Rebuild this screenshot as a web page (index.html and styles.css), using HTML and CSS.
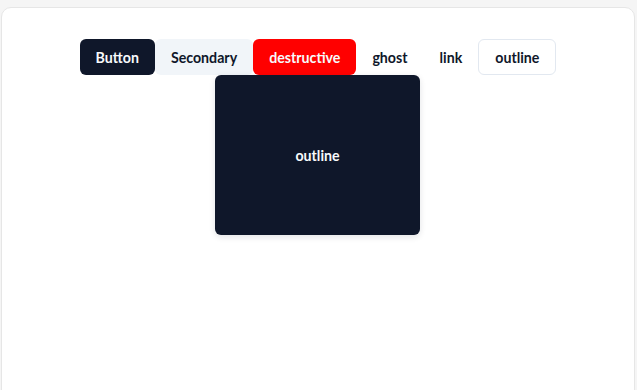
FILE: index.html
```html
<!DOCTYPE html>
<html lang="en">
<head>
<meta charset="UTF-8">
<meta name="viewport" content="width=device-width, initial-scale=1.0">
<title>Buttons</title>
<link rel="stylesheet" href="styles.css">
</head>
<body>
<div class="panel">
  <div class="row">
    <button class="btn btn-default">Button</button>
    <button class="btn btn-secondary">Secondary</button>
    <button class="btn btn-destructive">destructive</button>
    <button class="btn btn-ghost">ghost</button>
    <button class="btn btn-link">link</button>
    <button class="btn btn-outline">outline</button>
    <div class="popover">outline</div>
  </div>
</div>
</body>
</html>
```

FILE: styles.css
```css
* { margin: 0; padding: 0; box-sizing: border-box; }
body {
  font-family: Lato, 'Segoe UI', system-ui, sans-serif;
  background: #f5f5f5;
  color: #0f172a;
  height: 390px; overflow: hidden;
}
.panel {
  margin: 7px 2px 0 1px;
  height: 400px;
  background: #fff;
  border: 1px solid #e6e6e6;
  border-radius: 10px;
  padding-top: 31px;
}
.row {
  position: relative;
  display: flex; justify-content: center;
}
.btn {
  height: 36px; padding: 0 16px;
  border: none; border-radius: 6px;
  font-family: inherit; font-size: 14.2px; font-weight: 700;
  background: transparent; color: #0f172a;
  cursor: pointer;
}
.btn-default { background: #0f172a; color: #f8fafc; }
.btn-secondary { background: #f1f5f9; }
.btn-destructive { background: #ff0000; color: #f8fafc; }
.btn-outline { border: 1px solid #e2e8f0; background: #fff; }
.popover {
  position: absolute; top: 36px; left: calc(50% - 103px);
  width: 205px; height: 160px;
  background: #0f172a; color: #f8fafc;
  border-radius: 6px;
  box-shadow: 0 2px 6px rgba(15,23,42,.12);
  display: flex; align-items: center; justify-content: center;
  font-size: 14.2px; font-weight: 700;
}
```
